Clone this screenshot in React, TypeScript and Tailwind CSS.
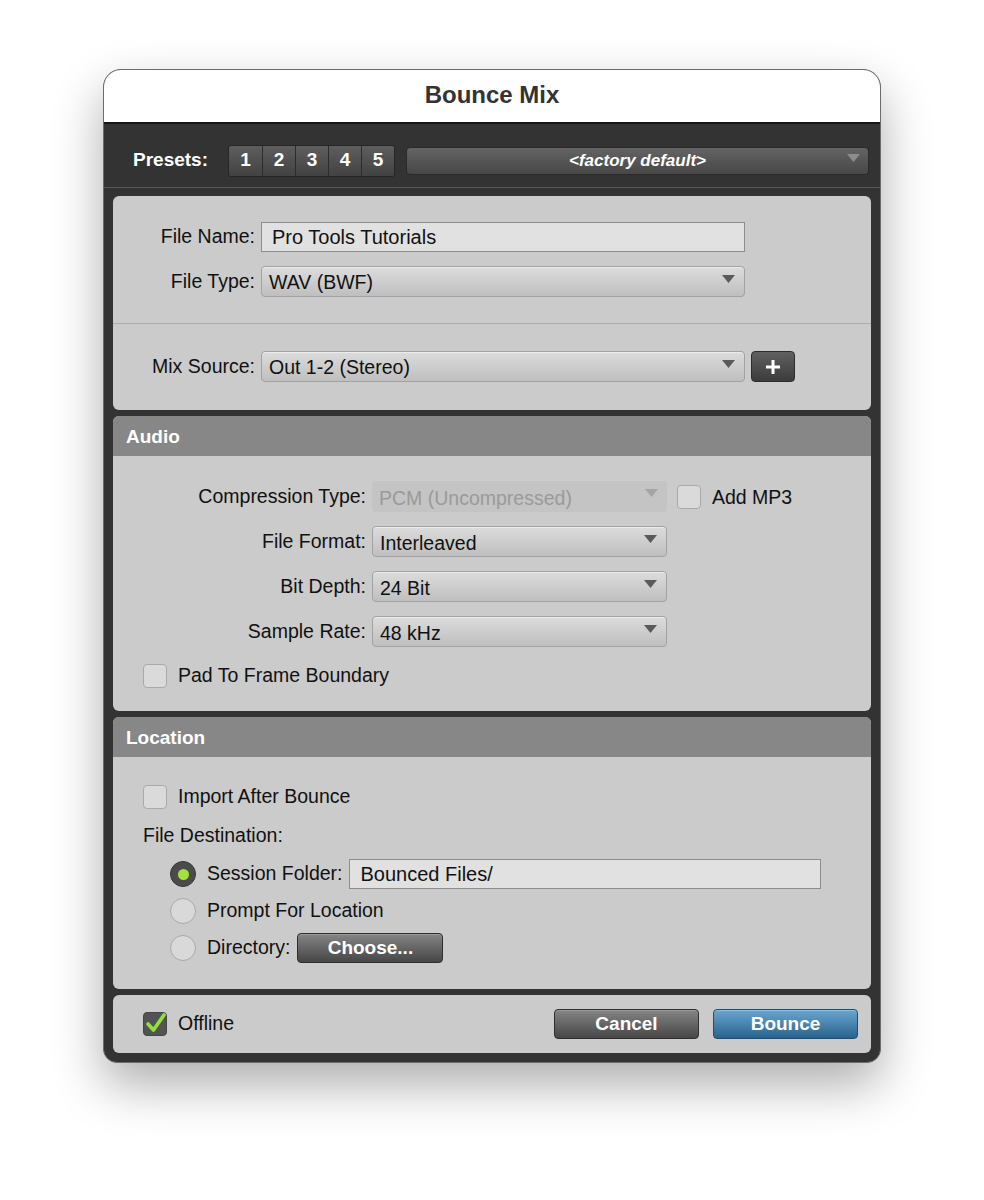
import * as React from "react"

function Arrow({ className = "fill-[#555]" }: { className?: string }) {
  return (
    <svg width="13" height="8" viewBox="0 0 13 8" className={className}>
      <path d="M0 0 H13 L6.5 8 Z" />
    </svg>
  )
}

function Dropdown({ value, width, disabled = false }: { value: string; width: string; disabled?: boolean }) {
  return (
    <div
      className={
        disabled
          ? `${width} h-[31px] rounded-[4px] bg-[#c4c4c4] flex items-center justify-between pl-[7px] pr-[9px] text-[19.5px] text-[#9a9a9a]`
          : `${width} h-[31px] rounded-[4px] border border-[#a2a2a2] bg-gradient-to-b from-[#dcdcdc] to-[#bfbfbf] shadow-[inset_0_1px_0_#ececec] flex items-center justify-between pl-[7px] pr-[9px] text-[19.5px] text-[#111]`
      }
    >
      <span className="pt-[3px]">{value}</span>
      <span className="self-start pt-[8px]">
        <Arrow className={disabled ? "fill-[#a4a4a4]" : "fill-[#5a5a5a]"} />
      </span>
    </div>
  )
}

function Checkbox({ checked = false }: { checked?: boolean }) {
  if (checked) {
    return (
      <div className="relative w-[24px] h-[24px] rounded-[4px] bg-[#535353] border border-[#444]">
        <svg width="26" height="26" viewBox="0 0 26 26" className="absolute -left-[1px] -top-[3px]">
          <path d="M5 14 L10.5 20 L21 5" fill="none" stroke="#8fe33a" strokeWidth="3.6" strokeLinecap="round" strokeLinejoin="round" />
        </svg>
      </div>
    )
  }
  return <div className="w-[24px] h-[24px] rounded-[4px] bg-[#dadada] border border-[#a9a9a9]" />
}

function Radio({ selected = false }: { selected?: boolean }) {
  if (selected) {
    return (
      <div className="w-[26px] h-[26px] rounded-full bg-[#4b4b4b] border border-[#363636] flex items-center justify-center">
        <div className="w-[11px] h-[11px] rounded-full bg-[#a2e33a]" />
      </div>
    )
  }
  return <div className="w-[26px] h-[26px] rounded-full bg-[#d9d9d9] border border-[#a9a9a9]" />
}

function DarkButton({ label, width, blue = false }: { label: string; width: string; blue?: boolean }) {
  return (
    <div
      className={
        blue
          ? `${width} h-[30px] rounded-[4px] border border-[#1e4d70] bg-gradient-to-b from-[#6aa6cf] to-[#28638f] shadow-[inset_0_1px_0_#8cc0e0] flex items-center justify-center text-white font-bold text-[19px]`
          : `${width} h-[30px] rounded-[4px] border border-[#2e2e2e] bg-gradient-to-b from-[#858585] to-[#474747] shadow-[inset_0_1px_0_#9a9a9a] flex items-center justify-center text-white font-bold text-[19px]`
      }
    >
      {label}
    </div>
  )
}

function SectionHeader({ title }: { title: string }) {
  return (
    <div className="h-[40px] bg-[#878787] flex items-center pl-[13px] pt-[2px] text-white font-bold text-[19px]">
      {title}
    </div>
  )
}

export default function App() {
  return (
    <div className="min-h-[1200px] bg-white flex justify-center pt-[69px] font-['Liberation_Sans',Arial,sans-serif]">
      <div className="w-[778px] h-[994px] rounded-t-[18px] rounded-b-[14px] border border-[#6c6c6c] bg-[#333333] overflow-hidden shadow-[0_22px_50px_rgba(0,0,0,0.32)] flex flex-col">
        {/* Title bar */}
        <div className="h-[54px] shrink-0 bg-white border-b-2 border-[#151515] flex items-center justify-center pb-[2px] text-[24px] font-bold text-[#333]">
          Bounce Mix
        </div>

        {/* Presets */}
        <div className="h-[64px] shrink-0 flex items-center pt-[10px] pl-[29px] pr-[11px] border-b border-[#575757]">
          <span className="text-white font-bold text-[19px]">Presets:</span>
          <div className="ml-[20px] flex h-[32px] rounded-[3px] border border-[#262626] overflow-hidden">
            {["1", "2", "3", "4", "5"].map((n, i) => (
              <div
                key={n}
                className={`w-[33px] h-full flex items-center justify-center text-white font-bold text-[19px] bg-gradient-to-b from-[#5e5e5e] to-[#424242] ${i > 0 ? "border-l border-[#2c2c2c]" : ""}`}
              >
                {n}
              </div>
            ))}
          </div>
          <div className="ml-[11px] flex-1 h-[28px] rounded-[4px] border border-[#2a2a2a] bg-gradient-to-b from-[#646464] to-[#474747] relative flex items-center justify-center">
            <span className="text-white font-bold italic text-[17px]">&lt;factory default&gt;</span>
            <span className="absolute right-[8px] top-[6px]">
              <Arrow className="fill-[#8c8c8c]" />
            </span>
          </div>
        </div>

        <div className="flex flex-col gap-[6px] px-[9px] pt-[8px]">
          {/* File panel */}
          <div className="h-[214px] rounded-[6px] bg-[#cbcbcb] flex flex-col overflow-hidden">
            <div className="h-[128px] flex flex-col gap-[14px] pt-[26px] border-b border-[#adadad]">
              <div className="flex items-center">
                <span className="w-[142px] text-right text-[19.5px] text-[#111]">File Name:</span>
                <div className="ml-[6px] w-[484px] h-[30px] bg-[#e1e1e1] border border-[#8d8d8d] flex items-center pl-[10px] text-[20px] text-[#111]">
                  Pro Tools Tutorials
                </div>
              </div>
              <div className="flex items-center">
                <span className="w-[142px] text-right text-[19.5px] text-[#111]">File Type:</span>
                <div className="ml-[6px]">
                  <Dropdown value="WAV (BWF)" width="w-[484px]" />
                </div>
              </div>
            </div>
            <div className="flex items-center pt-[27px]">
              <span className="w-[142px] text-right text-[19.5px] text-[#111]">Mix Source:</span>
              <div className="ml-[6px]">
                <Dropdown value="Out 1-2 (Stereo)" width="w-[484px]" />
              </div>
              <div className="ml-[6px] w-[44px] h-[31px] rounded-[4px] border border-[#2c2c2c] bg-gradient-to-b from-[#606060] to-[#3c3c3c] flex items-center justify-center">
                <svg width="14" height="14" viewBox="0 0 14 14">
                  <path d="M5.5 0 H8.5 V5.5 H14 V8.5 H8.5 V14 H5.5 V8.5 H0 V5.5 H5.5 Z" fill="#fff" />
                </svg>
              </div>
            </div>
          </div>

          {/* Audio panel */}
          <div className="h-[295px] rounded-[6px] bg-[#cbcbcb] flex flex-col overflow-hidden">
            <SectionHeader title="Audio" />
            <div className="flex flex-col pt-[25px]">
              <div className="flex flex-col gap-[14px]">
                <div className="flex items-center">
                  <span className="w-[253px] text-right text-[19.5px] text-[#111]">Compression Type:</span>
                  <div className="ml-[6px]">
                    <Dropdown value="PCM (Uncompressed)" width="w-[295px]" disabled />
                  </div>
                  <div className="ml-[10px]">
                    <Checkbox />
                  </div>
                  <span className="ml-[11px] pt-[2px] text-[19.5px] text-[#111]">Add MP3</span>
                </div>
                <div className="flex items-center">
                  <span className="w-[253px] text-right text-[19.5px] text-[#111]">File Format:</span>
                  <div className="ml-[6px]">
                    <Dropdown value="Interleaved" width="w-[295px]" />
                  </div>
                </div>
                <div className="flex items-center">
                  <span className="w-[253px] text-right text-[19.5px] text-[#111]">Bit Depth:</span>
                  <div className="ml-[6px]">
                    <Dropdown value="24 Bit" width="w-[295px]" />
                  </div>
                </div>
                <div className="flex items-center">
                  <span className="w-[253px] text-right text-[19.5px] text-[#111]">Sample Rate:</span>
                  <div className="ml-[6px]">
                    <Dropdown value="48 kHz" width="w-[295px]" />
                  </div>
                </div>
              </div>
              <div className="mt-[14px] flex items-center pl-[30px]">
                <Checkbox />
                <span className="ml-[11px] text-[19.5px] text-[#111]">Pad To Frame Boundary</span>
              </div>
            </div>
          </div>

          {/* Location panel */}
          <div className="h-[272px] rounded-[6px] bg-[#cbcbcb] flex flex-col overflow-hidden">
            <SectionHeader title="Location" />
            <div className="flex flex-col pt-[28px] pl-[30px]">
              <div className="h-[23px] flex items-center">
                <Checkbox />
                <span className="ml-[11px] text-[19.5px] text-[#111]">Import After Bounce</span>
              </div>
              <div className="mt-[17px] h-[22px] flex items-center text-[19.5px] text-[#111]">File Destination:</div>
              <div className="mt-[12px] h-[30px] flex items-center pl-[27px]">
                <Radio selected />
                <span className="ml-[11px] text-[19.5px] text-[#111]">Session Folder:</span>
                <div className="ml-[7px] w-[472px] h-[30px] bg-[#e1e1e1] border border-[#8d8d8d] flex items-center pl-[10px] text-[20px] text-[#111]">
                  Bounced Files/
                </div>
              </div>
              <div className="mt-[8px] h-[28px] flex items-center pl-[27px]">
                <Radio />
                <span className="ml-[11px] text-[19.5px] text-[#111]">Prompt For Location</span>
              </div>
              <div className="mt-[8px] h-[30px] flex items-center pl-[27px]">
                <Radio />
                <span className="ml-[11px] text-[19.5px] text-[#111]">Directory:</span>
                <div className="ml-[7px]">
                  <DarkButton label="Choose..." width="w-[146px]" />
                </div>
              </div>
            </div>
          </div>

          {/* Footer */}
          <div className="h-[58px] rounded-[6px] bg-[#cbcbcb] flex items-center pl-[30px] pr-[13px]">
            <Checkbox checked />
            <span className="ml-[11px] text-[19.5px] text-[#111]">Offline</span>
            <div className="ml-auto flex gap-[14px]">
              <DarkButton label="Cancel" width="w-[145px]" />
              <DarkButton label="Bounce" width="w-[145px]" blue />
            </div>
          </div>
        </div>
      </div>
    </div>
  )
}
